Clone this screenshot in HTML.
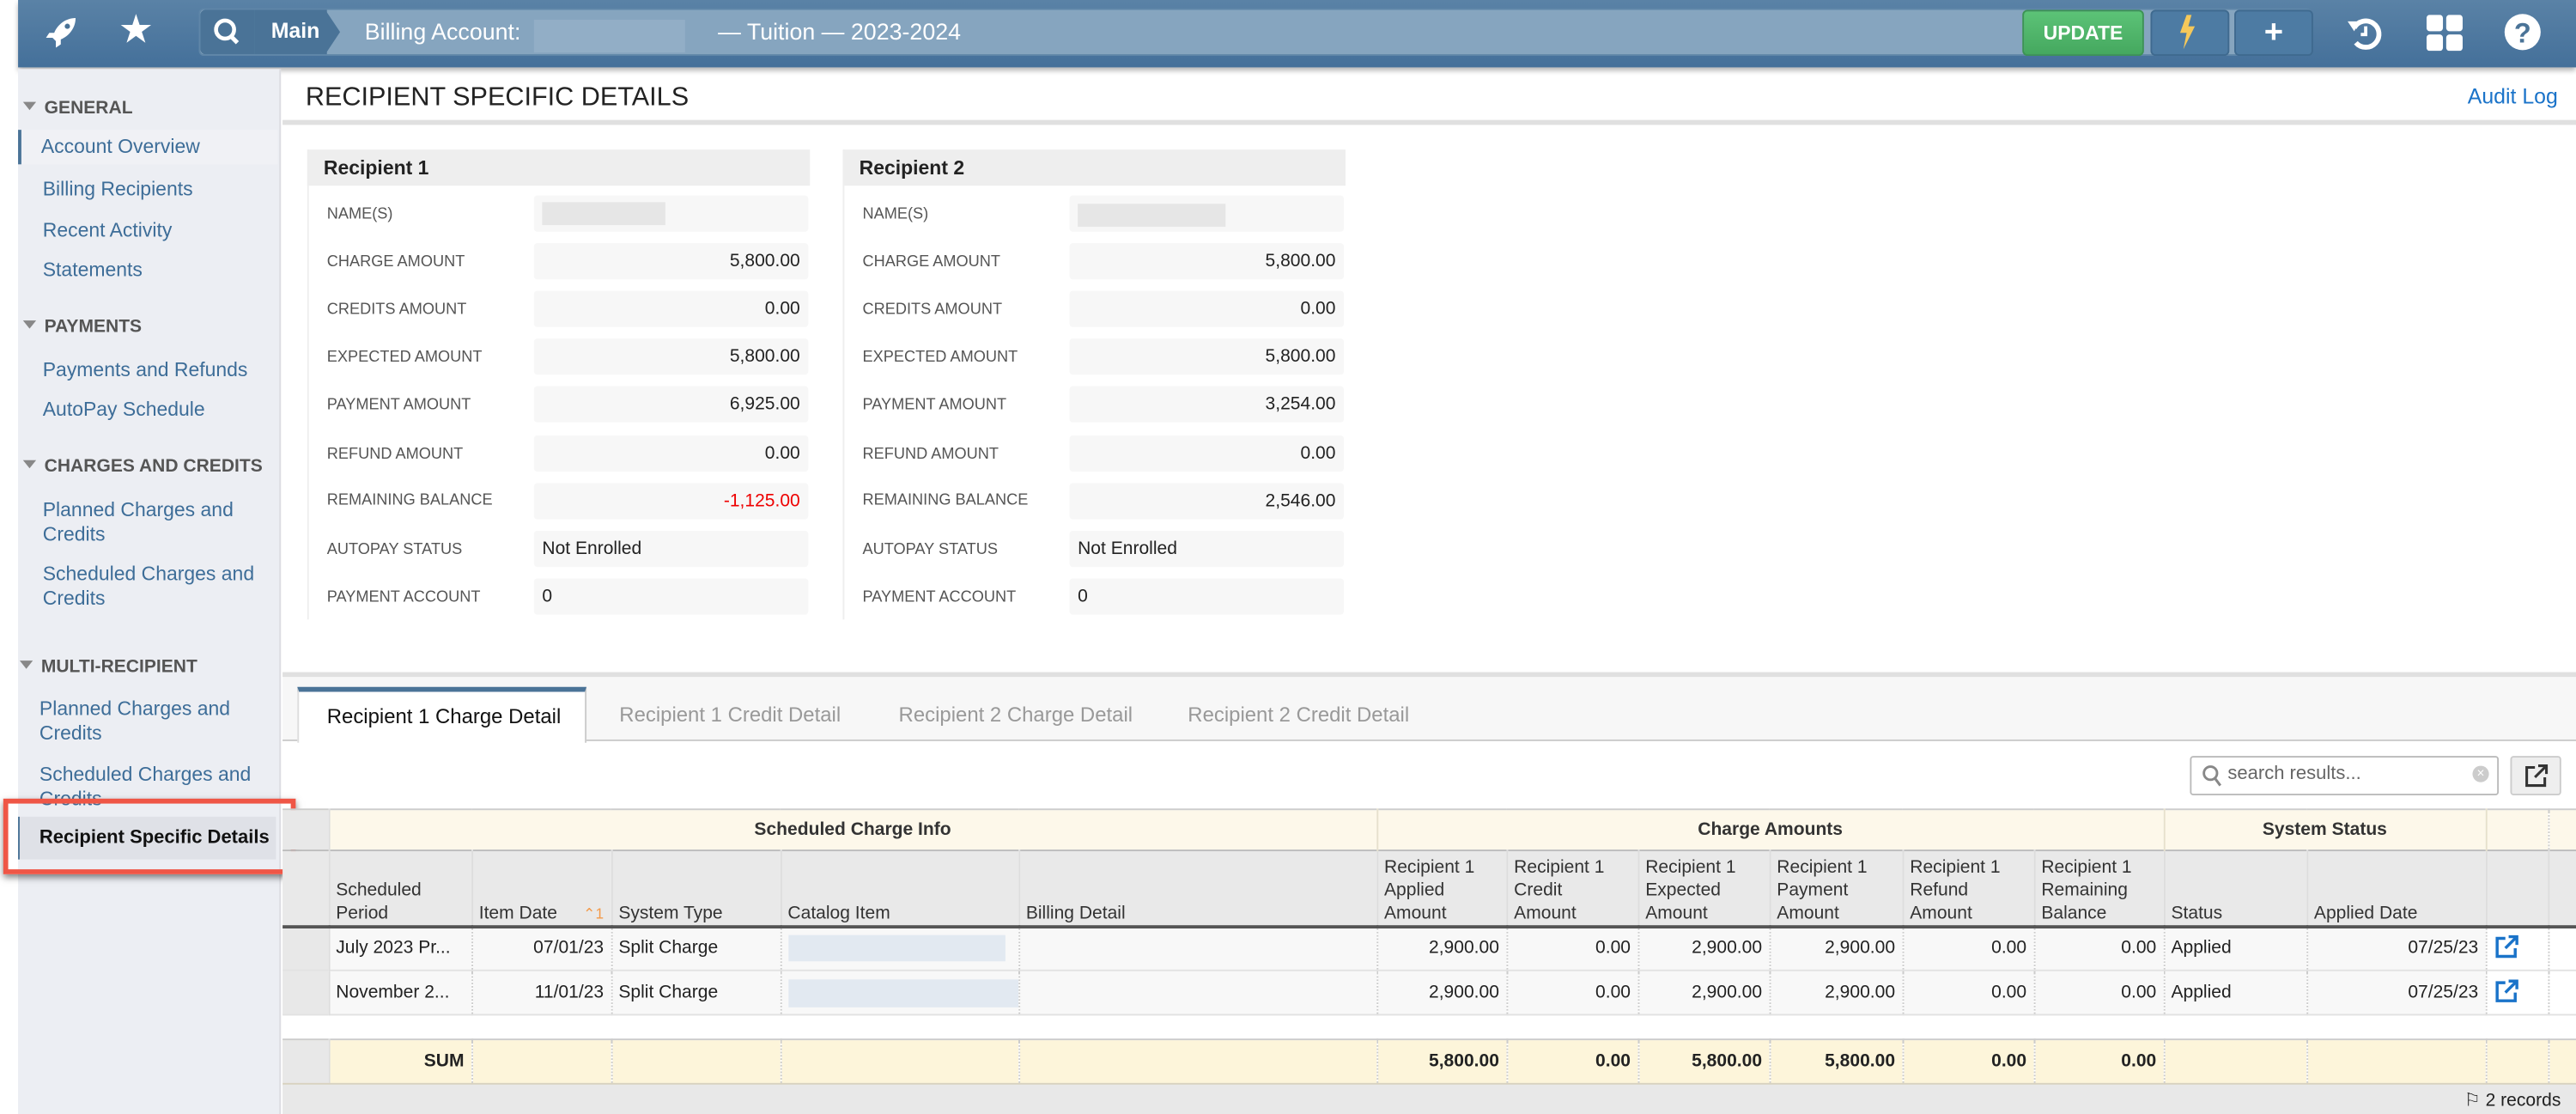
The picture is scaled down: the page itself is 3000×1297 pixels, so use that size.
<!DOCTYPE html>
<html><head><meta charset="utf-8">
<style>
*{box-sizing:border-box;margin:0;padding:0}
html,body{width:3000px;height:1296px;overflow:hidden;background:#fff}
#w{position:absolute;left:0;top:0;width:1568px;height:678px;transform:scale(1.91327);transform-origin:0 0;font-family:"Liberation Sans",sans-serif;font-size:11px;color:#222}
.a{position:absolute}
#top{left:11px;top:0;width:1557px;height:41px;background:linear-gradient(#5a82a6,#44709a);box-shadow:0 2px 3px rgba(0,0,0,.3)}
#crumb{left:121px;top:5px;width:1286px;height:29px;background:#86a5bf;border:1px solid #5f86a8;border-radius:3px}
#side{left:11px;top:42px;width:160px;height:636px;background:#eceef3;border-right:1px solid #dcdde2}
.sh{position:absolute;left:14px;font-weight:bold;color:#555;font-size:11px}
.sh:before{content:"";display:inline-block;border:4px solid transparent;border-top:5px solid #888;margin-right:5px;vertical-align:-2px}
.sl{position:absolute;left:15px;color:#3d6d98;font-size:12px;line-height:15px}
.lab{position:absolute;font-size:9.5px;color:#555}
.val{position:absolute;height:22px;background:#f7f7f7;border-radius:2px;font-size:11px;line-height:22px;padding:0 5px}
table{border-collapse:collapse;table-layout:fixed}
td{border-right:1px dotted #ccc;padding:0 4px;font-size:11px;overflow:hidden;white-space:nowrap}
.r{text-align:right}
</style></head><body><div id="w">
<div class="a" id="top"></div>
<svg class="a" style="left:26px;top:9px" width="22" height="22" viewBox="0 0 22 22"><path d="M20 2C14 2 9 6 7 11L4 11 2 14 6 14 8 16 8 20 11 18 11 15C16 13 20 8 20 2Z" fill="#fff"/><circle cx="15" cy="7" r="1.6" fill="#4a7397"/></svg>
<div class="a" style="left:72px;top:4px;color:#fff;font-size:24px">★</div>
<div class="a" id="crumb"></div>
<div class="a" style="left:122px;top:6px;width:33px;height:27px;background:#4a7397;border-radius:3px 0 0 3px"></div>
<svg class="a" style="left:129px;top:10px" width="18" height="18" viewBox="0 0 18 18"><circle cx="8" cy="8" r="5.5" stroke="#fff" stroke-width="2.4" fill="none"/><path d="M11.5 12l4 4" stroke="#fff" stroke-width="2.6"/></svg>
<div class="a" style="left:155px;top:6px;width:44px;height:27px;background:#4a7397"></div>
<svg class="a" style="left:198px;top:6px" width="10" height="27"><path d="M0 0L9 13.5 0 27Z" fill="#4a7397"/></svg>
<div class="a" style="left:165px;top:11px;color:#fff;font-size:13px;font-weight:bold">Main</div>
<div class="a" style="left:222px;top:11px;color:#fff;font-size:14px">Billing Account:</div>
<div class="a" style="left:325px;top:12px;width:92px;height:20px;background:#92aec6"></div>
<div class="a" style="left:437px;top:11px;color:#fff;font-size:14px">— Tuition — 2023-2024</div>
<div class="a" style="left:1231px;top:6px;width:74px;height:28px;background:linear-gradient(#5cc377,#45a85f);border:1px solid #3c9354;border-radius:3px;color:#fff;font-weight:bold;font-size:12px;text-align:center;line-height:26px">UPDATE</div>
<div class="a" style="left:1309px;top:6px;width:48px;height:28px;background:#4d7ba3;border:1px solid #3f6a8f;border-radius:3px"></div>
<svg class="a" style="left:1326px;top:9px" width="12" height="22"><path d="M5 0L1 11 5 11 3 21 10 7 6 7 8 0Z" fill="#f5c85a"/></svg>
<div class="a" style="left:1360px;top:6px;width:48px;height:28px;background:#4d7ba3;border:1px solid #3f6a8f;border-radius:3px;color:#fff;font-size:20px;font-weight:bold;text-align:center;line-height:26px">+</div>
<svg class="a" style="left:1428px;top:8px" width="24" height="24" viewBox="0 0 24 24"><path d="M5 9A8 8 0 1 1 6 18" stroke="#fff" stroke-width="3" fill="none"/><path d="M1 5L8 5 5 11Z" fill="#fff"/><path d="M12 8v5h-3" stroke="#fff" stroke-width="2" fill="none"/></svg>
<svg class="a" style="left:1477px;top:9px" width="22" height="22"><rect x="0" y="0" width="10" height="10" rx="2" fill="#fff"/><rect x="12" y="0" width="10" height="10" rx="2" fill="#fff"/><rect x="0" y="12" width="10" height="10" rx="2" fill="#fff"/><rect x="12" y="12" width="10" height="10" rx="2" fill="#fff"/></svg>
<svg class="a" style="left:1524px;top:8px" width="23" height="23"><circle cx="11.5" cy="11.5" r="11" fill="#fff"/><text x="11.5" y="18" text-anchor="middle" font-family="Liberation Sans" font-weight="bold" font-size="17" fill="#4a7397">?</text></svg>

<div class="a" id="side"></div>
<div class="sh" style="top:60px">GENERAL</div>
<div class="a" style="left:11px;top:79px;width:158px;height:21px;background:#f0f1f5;border-left:2px solid #4a7397"></div>
<div class="sl" style="top:82px;left:25px">Account Overview</div>
<div class="sl" style="top:108px;left:26px">Billing Recipients</div>
<div class="sl" style="top:133px;left:26px">Recent Activity</div>
<div class="sl" style="top:157px;left:26px">Statements</div>
<div class="sh" style="top:193px">PAYMENTS</div>
<div class="sl" style="top:218px;left:26px">Payments and Refunds</div>
<div class="sl" style="top:242px;left:26px">AutoPay Schedule</div>
<div class="sh" style="top:278px">CHARGES AND CREDITS</div>
<div class="sl" style="top:303px;left:26px">Planned Charges and<br>Credits</div>
<div class="sl" style="top:342px;left:26px">Scheduled Charges and<br>Credits</div>
<div class="sh" style="top:400px;left:12px">MULTI-RECIPIENT</div>
<div class="sl" style="top:424px;left:24px">Planned Charges and<br>Credits</div>
<div class="sl" style="top:464px;left:24px">Scheduled Charges and<br>Credits</div>
<div class="a" style="left:2px;top:486px;width:178px;height:46px;border:3px solid #ef5646;box-shadow:0 2px 4px rgba(0,0,0,.5)"></div>
<div class="a" style="left:11px;top:497px;width:157px;height:26px;background:#dfe1e7;border-left:1px solid #4a7397"></div>
<div class="a" style="left:24px;top:504px;font-size:11.5px;font-weight:bold;color:#111">Recipient Specific Details</div>

<div class="a" style="left:186px;top:51px;font-size:16px;color:#222">RECIPIENT SPECIFIC DETAILS</div>
<div class="a" style="left:1502px;top:51px;font-size:13px;color:#1a73c9">Audit Log</div>
<div class="a" style="left:172px;top:73px;width:1396px;height:3px;background:#e0e0e0"></div>

<div class="a" style="left:187px;top:91px;width:306px;height:286px;border-left:1px solid #eee"></div>
<div class="a" style="left:187px;top:91px;width:306px;height:22px;background:#eee;font-weight:bold;font-size:12px;padding:4px 10px">Recipient 1</div>
<div class="a" style="left:513px;top:91px;width:306px;height:286px;border-left:1px solid #eee"></div>
<div class="a" style="left:513px;top:91px;width:306px;height:22px;background:#eee;font-weight:bold;font-size:12px;padding:4px 10px">Recipient 2</div>

<div class="a" style="left:172px;top:409px;width:1396px;height:3px;background:#e0e0e0"></div>
<div class="a" style="left:172px;top:412px;width:1396px;height:39px;background:#f7f7f7;border-bottom:1px solid #ccc"></div>
<div class="a" style="left:181px;top:418px;width:176px;height:34px;background:#fff;border-top:3px solid #4a7397;border-right:1px solid #ccc;border-left:1px solid #ddd;font-size:12.5px;padding:8px 0 0 17px;color:#111">Recipient 1 Charge Detail</div>
<div class="a" style="left:377px;top:428px;font-size:12.5px;color:#999">Recipient 1 Credit Detail</div>
<div class="a" style="left:547px;top:428px;font-size:12.5px;color:#999">Recipient 2 Charge Detail</div>
<div class="a" style="left:723px;top:428px;font-size:12.5px;color:#999">Recipient 2 Credit Detail</div>

<div class="a" style="left:1333px;top:460px;width:188px;height:24px;border:1px solid #bbb;border-radius:2px;background:#fff"></div>
<svg class="a" style="left:1340px;top:465px" width="13" height="14"><circle cx="5.5" cy="5.5" r="4" stroke="#888" stroke-width="1.5" fill="none"/><path d="M8.5 9l3 4" stroke="#888" stroke-width="1.6"/></svg>
<div class="a" style="left:1356px;top:465px;font-size:11.5px;color:#666">search results...</div>
<div class="a" style="left:1505px;top:466px;width:10px;height:10px;border-radius:50%;background:#ccc;color:#fff;font-size:8px;line-height:10px;text-align:center">×</div>
<div class="a" style="left:1528px;top:460px;width:31px;height:24px;background:#eee;border:1px solid #ccc;border-radius:2px"></div>
<svg class="a" style="left:1536px;top:464px" width="16" height="16"><path d="M7 3H2v11h11V9" stroke="#333" stroke-width="1.6" fill="none"/><path d="M7 9L14 2M9 2h5v5" stroke="#333" stroke-width="1.6" fill="none"/></svg>

<table class="a" style="left:172px;top:492px;width:1396px;border-top:1px solid #ccc">
<colgroup><col style="width:28px"><col style="width:87px"><col style="width:85px"><col style="width:103px"><col style="width:145px"><col style="width:218px"><col style="width:79px"><col style="width:80px"><col style="width:80px"><col style="width:81px"><col style="width:80px"><col style="width:79px"><col style="width:87px"><col style="width:109px"><col style="width:38px"><col style="width:17px"></colgroup>
<tr style="height:25px;background:#fdf8ea;font-weight:bold;color:#333;border-bottom:1px solid #bbb">
<td style="background:#e8e8e8;border-right:1px solid #ddd"></td><td colspan="5" style="text-align:center;font-weight:bold;border-right:1px solid #e6e0cc">Scheduled Charge Info</td><td colspan="6" style="text-align:center;font-weight:bold;border-right:1px solid #e6e0cc">Charge Amounts</td><td colspan="2" style="text-align:center;font-weight:bold;border-right:1px solid #e6e0cc">System Status</td><td></td><td></td></tr>
<tr style="height:46px;background:#e9e9e9;color:#333;border-bottom:2px solid #555;vertical-align:bottom;line-height:14px">
<td style="border-right:1px solid #ddd"></td><td style="border-right:1px solid #ddd">Scheduled<br>Period</td><td style="border-right:1px solid #ddd">Item Date <span style="color:#f39a4a;float:right;font-size:9px">⌃1</span></td><td style="border-right:1px solid #ddd">System Type</td><td style="border-right:1px solid #ddd">Catalog Item</td><td style="border-right:1px solid #ddd">Billing Detail</td>
<td style="border-right:1px solid #ddd">Recipient 1<br>Applied<br>Amount</td><td style="border-right:1px solid #ddd">Recipient 1<br>Credit<br>Amount</td><td style="border-right:1px solid #ddd">Recipient 1<br>Expected<br>Amount</td><td style="border-right:1px solid #ddd">Recipient 1<br>Payment<br>Amount</td><td style="border-right:1px solid #ddd">Recipient 1<br>Refund<br>Amount</td><td style="border-right:1px solid #ddd">Recipient 1<br>Remaining<br>Balance</td><td style="border-right:1px solid #ddd">Status</td><td style="border-right:1px solid #ddd">Applied Date</td><td style="border-right:1px solid #ddd"></td><td></td></tr>
<tr style="height:27px;background:#f8f8f8;border-bottom:1px solid #e2e2e2">
<td style="background:#e8e8e8;border-right:1px solid #ddd"></td><td>July 2023 Pr...</td><td class="r">07/01/23</td><td>Split Charge</td><td><div style="height:16px;width:132px;background:#e2e9f1"></div></td><td></td><td class="r">2,900.00</td><td class="r">0.00</td><td class="r">2,900.00</td><td class="r">2,900.00</td><td class="r">0.00</td><td class="r">0.00</td><td>Applied</td><td class="r">07/25/23</td><td style="background:#fff"><svg width="16" height="16"><path d="M7 3H2v11h11V9" stroke="#1a73c9" stroke-width="1.8" fill="none"/><path d="M7 9L14 2M9 2h5v5" stroke="#1a73c9" stroke-width="1.8" fill="none"/></svg></td><td style="background:#fff"></td></tr>
<tr style="height:27px;background:#f8f8f8;border-bottom:1px solid #e2e2e2">
<td style="background:#e8e8e8;border-right:1px solid #ddd"></td><td>November 2...</td><td class="r">11/01/23</td><td>Split Charge</td><td><div style="height:17px;width:140px;background:#e2e9f1"></div></td><td></td><td class="r">2,900.00</td><td class="r">0.00</td><td class="r">2,900.00</td><td class="r">2,900.00</td><td class="r">0.00</td><td class="r">0.00</td><td>Applied</td><td class="r">07/25/23</td><td style="background:#fff"><svg width="16" height="16"><path d="M7 3H2v11h11V9" stroke="#1a73c9" stroke-width="1.8" fill="none"/><path d="M7 9L14 2M9 2h5v5" stroke="#1a73c9" stroke-width="1.8" fill="none"/></svg></td><td style="background:#fff"></td></tr>
<tr style="height:15px;background:#fff;border-bottom:1px solid #ccc"><td colspan="16" style="border:none"></td></tr>
<tr style="height:27px;background:#fdf5da;font-weight:bold;border-bottom:2px solid #d8d2c0">
<td style="background:#e8e8e8;border-right:1px solid #ddd"></td><td class="r">SUM</td><td></td><td></td><td></td><td></td><td class="r">5,800.00</td><td class="r">0.00</td><td class="r">5,800.00</td><td class="r">5,800.00</td><td class="r">0.00</td><td class="r">0.00</td><td></td><td></td><td></td><td></td></tr>
</table>
<div class="a" style="left:172px;top:660px;width:1396px;height:18px;background:#e8e8e8"></div>
<div class="a" style="left:1500px;top:663px;font-size:11px;color:#222">⚐ 2 records</div>

<div class="lab" style="left:199px;top:125px">NAME(S)</div><div class="val" style="left:325px;top:119px;width:167px"><div style="margin-top:4px;width:75px;height:14px;background:#e6e6e6"></div></div>
<div class="lab" style="left:199px;top:154px">CHARGE AMOUNT</div><div class="val r" style="left:325px;top:148px;width:167px">5,800.00</div>
<div class="lab" style="left:199px;top:183px">CREDITS AMOUNT</div><div class="val r" style="left:325px;top:177px;width:167px">0.00</div>
<div class="lab" style="left:199px;top:212px">EXPECTED AMOUNT</div><div class="val r" style="left:325px;top:206px;width:167px">5,800.00</div>
<div class="lab" style="left:199px;top:241px">PAYMENT AMOUNT</div><div class="val r" style="left:325px;top:235px;width:167px">6,925.00</div>
<div class="lab" style="left:199px;top:271px">REFUND AMOUNT</div><div class="val r" style="left:325px;top:265px;width:167px">0.00</div>
<div class="lab" style="left:199px;top:299px">REMAINING BALANCE</div><div class="val r" style="left:325px;top:294px;width:167px;color:#e00">-1,125.00</div>
<div class="lab" style="left:199px;top:329px">AUTOPAY STATUS</div><div class="val" style="left:325px;top:323px;width:167px">Not Enrolled</div>
<div class="lab" style="left:199px;top:358px">PAYMENT ACCOUNT</div><div class="val" style="left:325px;top:352px;width:167px">0</div>

<div class="lab" style="left:525px;top:125px">NAME(S)</div><div class="val" style="left:651px;top:119px;width:167px"><div style="margin-top:5px;width:90px;height:14px;background:#e6e6e6"></div></div>
<div class="lab" style="left:525px;top:154px">CHARGE AMOUNT</div><div class="val r" style="left:651px;top:148px;width:167px">5,800.00</div>
<div class="lab" style="left:525px;top:183px">CREDITS AMOUNT</div><div class="val r" style="left:651px;top:177px;width:167px">0.00</div>
<div class="lab" style="left:525px;top:212px">EXPECTED AMOUNT</div><div class="val r" style="left:651px;top:206px;width:167px">5,800.00</div>
<div class="lab" style="left:525px;top:241px">PAYMENT AMOUNT</div><div class="val r" style="left:651px;top:235px;width:167px">3,254.00</div>
<div class="lab" style="left:525px;top:271px">REFUND AMOUNT</div><div class="val r" style="left:651px;top:265px;width:167px">0.00</div>
<div class="lab" style="left:525px;top:299px">REMAINING BALANCE</div><div class="val r" style="left:651px;top:294px;width:167px">2,546.00</div>
<div class="lab" style="left:525px;top:329px">AUTOPAY STATUS</div><div class="val" style="left:651px;top:323px;width:167px">Not Enrolled</div>
<div class="lab" style="left:525px;top:358px">PAYMENT ACCOUNT</div><div class="val" style="left:651px;top:352px;width:167px">0</div>
</div></body></html>
